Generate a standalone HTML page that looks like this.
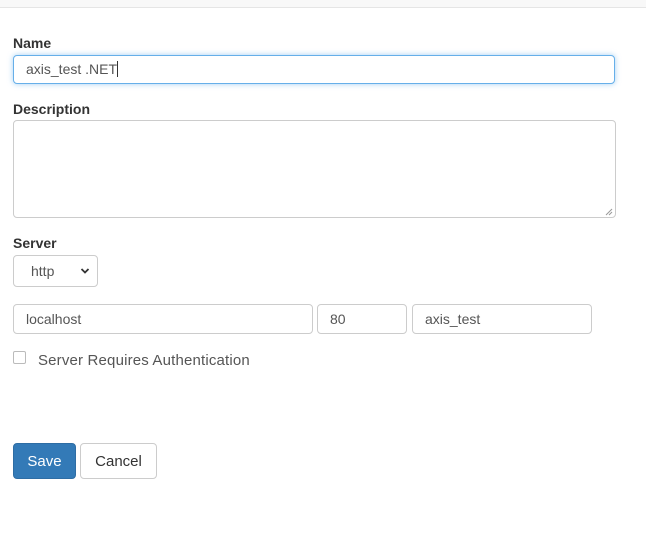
<!DOCTYPE html>
<html><head><style>
body{margin:0;width:646px;height:543px;background:#fff;font-family:"Liberation Sans",sans-serif;color:#555;position:relative;overflow:hidden}
.a{position:absolute;box-sizing:border-box}
.top{left:0;top:0;width:646px;height:8px;background:#f8f8f8;border-bottom:1px solid #e5e5e5}
.lbl{font-weight:bold;font-size:14px;color:#333}
.inp{border:1px solid #ccc;border-radius:4px;background:#fff;font-size:14px;padding-left:12px;line-height:28px;color:#555}
.btn{border-radius:4px;font-size:15px;text-align:center;line-height:35px}
</style></head><body>
<div class="a top"></div>
<div class="a lbl" style="left:13px;top:35px">Name</div>
<div class="a inp" style="left:13px;top:55px;width:602px;height:29px;border-color:#66afe9;box-shadow:0 0 6px rgba(102,175,233,.6);line-height:27px">axis_test .NET<span style="display:inline-block;width:1px;height:16px;background:#333;vertical-align:-3px"></span></div>
<div class="a lbl" style="left:13px;top:101px">Description</div>
<div class="a inp" style="left:13px;top:120px;width:603px;height:98px"></div>
<svg class="a" style="left:604px;top:207px" width="9" height="9"><path d="M8 2L2 8M8 5L5 8" stroke="#999" stroke-width="1"/></svg>
<div class="a lbl" style="left:13px;top:235px">Server</div>
<div class="a inp" style="left:13px;top:255px;width:85px;height:32px;line-height:30px;padding-left:17px">http</div>
<svg class="a" style="left:80px;top:267px" width="10" height="8"><path d="M1.5 2L5 5.5L8.5 2" stroke="#333" stroke-width="1.8" fill="none"/></svg>
<div class="a inp" style="left:13px;top:304px;width:300px;height:30px">localhost</div>
<div class="a inp" style="left:317px;top:304px;width:90px;height:30px">80</div>
<div class="a inp" style="left:412px;top:304px;width:180px;height:30px">axis_test</div>
<div class="a" style="left:13px;top:351px;width:13px;height:13px;border:1px solid #bbb;border-radius:2px"></div>
<div class="a" style="left:38px;top:352px;font-size:15px;letter-spacing:0.17px;color:#555">Server Requires Authentication</div>
<div class="a btn" style="left:13px;top:443px;width:63px;height:36px;background:#337ab7;border:1px solid #2e6da4;color:#fff">Save</div>
<div class="a btn" style="left:80px;top:443px;width:77px;height:36px;background:#fff;border:1px solid #ccc;color:#333">Cancel</div>
</body></html>
